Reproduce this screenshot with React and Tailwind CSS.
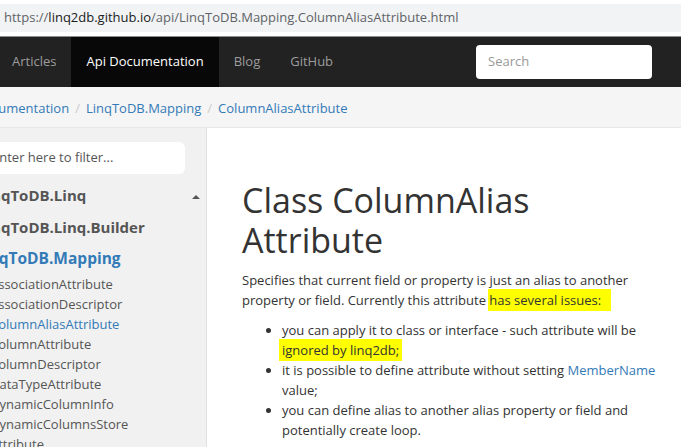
const navItems = [
  { label: 'Articles', active: false },
  { label: 'Api Documentation', active: true },
  { label: 'Blog', active: false },
  { label: 'GitHub', active: false },
];

const mappingItems = [
  { label: 'AssociationAttribute' },
  { label: 'AssociationDescriptor' },
  { label: 'ColumnAliasAttribute', active: true },
  { label: 'ColumnAttribute' },
  { label: 'ColumnDescriptor' },
  { label: 'DataTypeAttribute' },
  { label: 'DynamicColumnInfo' },
  { label: 'DynamicColumnsStore' },
  { label: 'Attribute' },
];

function UrlBar() {
  return (
    <div className="h-[37px] bg-white border-b border-[#8d8d8d] pt-[4px]">
      <div className="h-[28px] bg-[#f1f3f4] flex items-center pl-[4px] text-[13px] text-[#5f6368] whitespace-nowrap">
        <span>https://</span>
        <span className="text-[#202124]">linq2db.github.io</span>
        <span>/api/LinqToDB.Mapping.ColumnAliasAttribute.html</span>
      </div>
    </div>
  );
}

function Navbar() {
  return (
    <div className="h-[50px] bg-[#222222] flex items-stretch text-[13px]">
      <div className="flex items-stretch ml-[-3px]">
        {navItems.map((item) => (
          <div
            key={item.label}
            className={
              item.active
                ? 'px-[15px] flex items-center bg-[#080808] text-white'
                : 'px-[15px] flex items-center text-[#9d9d9d]'
            }
          >
            {item.label}
          </div>
        ))}
      </div>
      <div className="ml-auto mr-[29px] flex items-center">
        <div className="w-[176px] h-[34px] bg-white rounded-[4px] flex items-center px-[12px] text-[#999999] text-[13px]">
          Search
        </div>
      </div>
    </div>
  );
}

function Breadcrumb() {
  return (
    <div className="h-[41px] bg-[#f5f5f5] border-b border-[#e7e7e7] flex items-center pt-[3px] text-[13px] whitespace-nowrap">
      <div className="flex items-center ml-[-48px] gap-[5px]">
        <span className="text-[#337ab7]">Api Documentation</span>
        <span className="text-[#cccccc] px-[1px]">/</span>
        <span className="text-[#337ab7]">LinqToDB.Mapping</span>
        <span className="text-[#cccccc] px-[1px]">/</span>
        <span className="text-[#337ab7]">ColumnAliasAttribute</span>
      </div>
    </div>
  );
}

function Sidebar() {
  return (
    <div className="w-[207px] shrink-0 bg-[#f1f1f1] border-r border-[#e0e0e0] relative">
      <div className="ml-[-14px] mr-[21px] mt-[14px] h-[32px] bg-white rounded-[6px] flex items-center pl-[6px] text-[13px] text-[#555555] whitespace-nowrap">
        Enter here to filter...
      </div>
      <div className="absolute right-[6px] top-[67px] w-0 h-0 border-l-[4px] border-r-[4px] border-b-[4px] border-l-transparent border-r-transparent border-b-[#555555]" />
      <div className="ml-[-22px] mt-[5px] whitespace-nowrap">
        <div className="h-[32px] flex items-center font-bold text-[15px] text-[#555555]">LinqToDB.Linq</div>
        <div className="h-[32px] flex items-center font-bold text-[15px] text-[#555555]">LinqToDB.Linq.Builder</div>
        <div className="h-[32px] flex items-center font-bold text-[15.5px] text-[#337ab7] ml-[-3px]">LinqToDB.Mapping</div>
      </div>
      <div className="ml-[-10px] whitespace-nowrap text-[13px]">
        {mappingItems.map((item) => (
          <div
            key={item.label}
            className={item.active ? 'h-[20px] flex items-center text-[#337ab7]' : 'h-[20px] flex items-center text-[#555555]'}
          >
            {item.label}
          </div>
        ))}
      </div>
    </div>
  );
}

function Article() {
  return (
    <div className="flex-1 pl-[35px] pr-[10px] pt-[52px] text-[#333333]">
      <h1 className="text-[34px] leading-[40px] font-normal text-[#333333]">
        Class ColumnAlias
        <br />
        Attribute
      </h1>
      <p className="mt-[10px] text-[13px] leading-[20px]">
        Specifies that current field or property is just an alias to another property or field. Currently this attribute{' '}
        <span className="bg-[#ffff00] pl-[1px] pr-[10px] py-[2px] ml-[-1px]">has several issues:</span>
      </p>
      <ul className="mt-[10px] pl-[40px] text-[13px] leading-[20px] list-disc">
        <li>
          you can apply it to class or interface - such attribute will be{' '}
          <span className="bg-[#ffff00] py-[2px] px-[3px] ml-[-3px]">ignored by linq2db;</span>
        </li>
        <li>
          it is possible to define attribute without setting <span className="text-[#337ab7]">MemberName</span> value;
        </li>
        <li>you can define alias to another alias property or field and potentially create loop.</li>
      </ul>
    </div>
  );
}

export default function App() {
  return (
    <div className="w-[681px] h-[447px] overflow-hidden bg-white" style={{ fontFamily: '"Open Sans", "Noto Sans", sans-serif' }}>
      <UrlBar />
      <Navbar />
      <Breadcrumb />
      <div className="flex h-[319px]">
        <Sidebar />
        <Article />
      </div>
    </div>
  );
}
